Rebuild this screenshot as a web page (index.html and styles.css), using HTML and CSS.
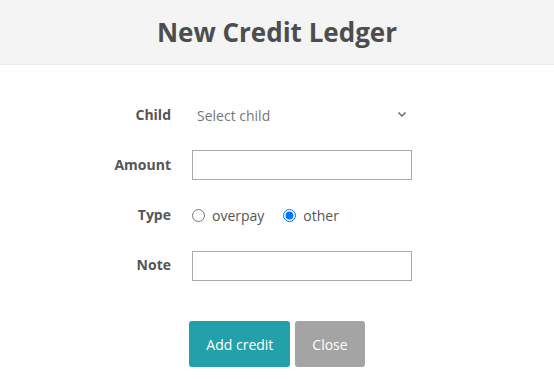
FILE: index.html
```html
<!DOCTYPE html>
<html lang="en">
<head>
  <meta charset="UTF-8">
  <meta name="viewport" content="width=device-width, initial-scale=1.0">
  <title>New Credit Ledger</title>
  <link rel="stylesheet" href="styles.css">
</head>
<body>
  <div class="modal-header">
    <h1>New Credit Ledger</h1>
  </div>
  <form class="ledger-form">
    <div class="fields">
      <label for="child">Child</label>
      <div class="select-wrap">
        <select id="child">
          <option>Select child</option>
        </select>
        <svg class="chevron" width="10" height="8" viewBox="0 0 10 8"><path d="M1.5 2.5 L5 6 L8.5 2.5" fill="none" stroke="#666" stroke-width="1.5"/></svg>
      </div>

      <label for="amount">Amount</label>
      <input type="text" id="amount">

      <label>Type</label>
      <div class="radios">
        <label class="radio"><input type="radio" name="type" value="overpay"> overpay</label>
        <label class="radio"><input type="radio" name="type" value="other" checked> other</label>
      </div>

      <label for="note">Note</label>
      <input type="text" id="note" class="note">
    </div>
    <div class="actions">
      <button type="button" class="btn btn-add">Add credit</button>
      <button type="button" class="btn btn-close">Close</button>
    </div>
  </form>
</body>
</html>
```

FILE: styles.css
```css
body {
  margin: 0;
  font-family: "Open Sans", sans-serif;
  color: #555;
  background: #fff;
}

.modal-header {
  height: 64px;
  background-color: #f4f4f4;
  border-bottom: 1px solid #e9e9e9;
  display: flex;
  align-items: center;
  justify-content: center;
}

.modal-header h1 {
  margin: 0;
  font-size: 26px;
  font-weight: 700;
  color: #4d4d4d;
}

.fields {
  display: grid;
  grid-template-columns: 71px 220px;
  column-gap: 21px;
  row-gap: 20px;
  grid-auto-rows: 30px;
  margin: 35px 0 0 100px;
  align-items: center;
}

.fields > label {
  text-align: right;
  font-size: 14px;
  font-weight: 700;
  color: #555;
  margin-top: -2px;
}

.select-wrap {
  position: relative;
  height: 30px;
}

select {
  appearance: none;
  border: none;
  background: transparent;
  width: 100%;
  height: 30px;
  padding: 0 5px;
  font-family: "Open Sans", sans-serif;
  font-size: 14px;
  color: #777;
}

.chevron {
  position: absolute;
  right: 5px;
  top: 10px;
  pointer-events: none;
}

input[type="text"] {
  box-sizing: border-box;
  height: 30px;
  width: 220px;
  border: 1px solid #a9a9a9;
  font-family: "Open Sans", sans-serif;
  font-size: 14px;
}

input.note {
  margin-top: 2px;
}

.radios {
  display: flex;
  align-items: center;
  font-size: 14px;
  color: #555;
}

.radio {
  display: flex;
  align-items: center;
  margin-right: 19px;
}

.radio input {
  margin: 0 7px 0 0;
  width: 13px;
  height: 13px;
}

.actions {
  display: flex;
  justify-content: center;
  gap: 5px;
  margin-top: 41px;
}

.btn {
  height: 46px;
  border: none;
  border-radius: 3px;
  color: #fff;
  font-family: "Open Sans", sans-serif;
  font-size: 14px;
  padding: 0 17px;
}

.btn-add {
  background-color: #22a1ab;
}

.btn-close {
  background-color: #a4a4a4;
}
```
